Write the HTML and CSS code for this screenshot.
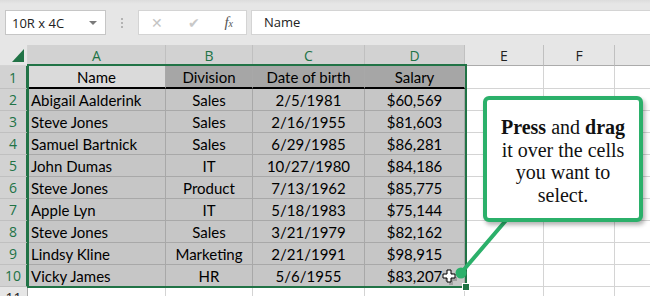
FILE: index.html
```html
<!DOCTYPE html>
<html lang="en">
<head>
    <meta charset="UTF-8">
    <title>Select a range</title>
    <link rel="stylesheet" href="styles.css">
</head>
<body>
    <div class="window">
        <div class="toolbar">
            <div class="namebox">
                <span>10R x 4C</span>
                <span class="arrow"></span>
            </div>
            <div class="grip"><i></i><i></i><i></i></div>
            <div class="fbuttons">
                <span class="fbtn">&#x2715;</span>
                <span class="fbtn check">&#x2714;</span>
                <span class="fbtn fx">f<small>x</small></span>
            </div>
            <div class="formula">Name</div>
        </div>

        <div class="sheet" id="sheet"></div>

        <div class="selection"><span class="handle"></span></div>

        <svg class="overlay" width="650" height="296" viewBox="0 0 650 296">
            <line x1="508" y1="218" x2="461" y2="273" stroke="#2bb06a" stroke-width="4" stroke-linecap="round"/>
            <circle cx="461" cy="273" r="5.5" fill="#2bb06a"/>
            <path d="M449 273h4v4h4v4h-4v4h-4v-4h-4v-4h4z" fill="#777" opacity="0.5"/>
            <path d="M447 270h4v4h4v4h-4v4h-4v-4h-4v-4h4z" fill="#fff" stroke="#000" stroke-width="1"/>
        </svg>

        <div class="callout">
            <b>Press</b> and <b>drag</b><br>it over the cells<br>you want to<br>select.
        </div>
    </div>

    <script>
        const cols = ['A', 'B', 'C', 'D', 'E', 'F', 'G'];
        const rows = [
            ['Name', 'Division', 'Date of birth', 'Salary'],
            ['Abigail Aalderink', 'Sales', '2/5/1981', '$60,569'],
            ['Steve Jones', 'Sales', '2/16/1955', '$81,603'],
            ['Samuel Bartnick', 'Sales', '6/29/1985', '$86,281'],
            ['John Dumas', 'IT', '10/27/1980', '$84,186'],
            ['Steve Jones', 'Product', '7/13/1962', '$85,775'],
            ['Apple Lyn', 'IT', '5/18/1983', '$75,144'],
            ['Steve Jones', 'Sales', '3/21/1979', '$82,162'],
            ['Lindsy Kline', 'Marketing', '2/21/1991', '$98,915'],
            ['Vicky James', 'HR', '5/6/1955', '$83,207']
        ];
        const sheet = document.getElementById('sheet');

        function cell(cls, text) {
            const d = document.createElement('div');
            d.className = cls;
            d.textContent = text || '';
            sheet.appendChild(d);
        }

        // column headers
        cell('corner');
        cols.forEach(function(c, i) {
            cell(i < 4 ? 'colhead on' : 'colhead', c);
        });

        // rows 1..11
        for (let r = 0; r < 11; r++) {
            const data = rows[r];
            cell(data ? 'rowhead on' : 'rowhead', String(r + 1));
            cols.forEach(function(c, i) {
                let cls = 'cell';
                if (data && i < 4) {
                    cls += ' sel';
                    if (r === 0) cls += i === 0 ? ' active title' : ' title';
                    if (i === 0 && r > 0) cls += ' left';
                }
                cell(cls, data && i < 4 ? data[i] : '');
            });
        }
    </script>
</body>
</html>
```

FILE: styles.css
```css
body {
    margin: 0;
    background: #fff;
}

.window {
    position: relative;
    width: 650px;
    height: 296px;
    overflow: hidden;
    font-family: 'Open Sans', sans-serif;
}

/* formula bar */
.toolbar {
    height: 45px;
    box-sizing: border-box;
    padding: 10px 0 0 5px;
    display: flex;
    align-items: flex-start;
    background: linear-gradient(#dcdcdc, #e6e6e6 4px);
}

.namebox {
    width: 101px;
    height: 25px;
    box-sizing: border-box;
    border: 1px solid #c6c6c6;
    background: #fff;
    display: flex;
    align-items: center;
    justify-content: space-between;
    padding: 0 8px 0 6px;
    font-size: 13px;
    color: #222;
}

.arrow {
    border: 4px solid transparent;
    border-top: 4px solid #7a7a7a;
    margin-top: 4px;
}

.grip {
    width: 32px;
    height: 25px;
    display: flex;
    flex-direction: column;
    align-items: center;
    justify-content: center;
    gap: 2px;
}

.grip i {
    width: 2px;
    height: 2px;
    background: #b3b3b3;
}

.fbuttons {
    width: 109px;
    height: 25px;
    box-sizing: border-box;
    border: 1px solid #d4d4d4;
    background: #fff;
    display: flex;
    align-items: center;
    justify-content: space-between;
    padding: 0 13px 0 12px;
}

.fbtn {
    font-size: 14px;
    color: #c4c4c4;
}

.fbtn.check {
    color: #c8c8c8;
}

.fx {
    font-family: 'Liberation Serif', serif;
    font-style: italic;
    color: #555;
    font-size: 15px;
}

.fx small {
    font-size: 10px;
}

.formula {
    flex: 1;
    height: 25px;
    box-sizing: border-box;
    margin-left: 4px;
    border: 1px solid #d4d4d4;
    border-right: none;
    background: #fff;
    padding: 2px 0 0 12px;
    font-size: 13px;
    color: #222;
}

/* grid */
.sheet {
    display: grid;
    width: 700px;
    grid-template-columns: 28px 138px 87px 112px 100px 79px 71px 1fr;
    grid-template-rows: 21px 23px repeat(9, 22px) 22px;
    font-family: 'Lato', sans-serif;
    font-size: 15px;
}

.sheet > div {
    box-sizing: border-box;
    border-right: 1px solid #d4d4d4;
    border-bottom: 1px solid #d4d4d4;
    display: flex;
    align-items: center;
    justify-content: center;
    white-space: nowrap;
    overflow: hidden;
}

.corner {
    background: #e6e6e6;
    position: relative;
}

.corner::after {
    content: '';
    position: absolute;
    right: 3px;
    bottom: 3px;
    border-left: 12px solid transparent;
    border-bottom: 13px solid #217346;
}

.colhead,
.rowhead {
    background: #e6e6e6;
    font-family: 'Open Sans', sans-serif;
    font-size: 14px;
    color: #222;
}

.sheet > .colhead {
    border-right-color: #c0c0c0;
    border-bottom-color: #ababab;
}

.sheet > .rowhead {
    border-bottom-color: #c0c0c0;
    border-right-color: #ababab;
}

.colhead.on,
.rowhead.on {
    background: #d2d2d2;
    color: #217346;
}

.sheet > .colhead.on {
    border-bottom: 2px solid #217346;
    padding-top: 1px;
}

.sheet > .rowhead.on {
    border-right: 2px solid #217346;
}

.cell {
    color: #000;
}

.sheet > .sel {
    background: #c6c6c6;
    border-color: #a8a8a8;
}

.sheet > .title {
    background: #a6a6a6;
    border-bottom: 2px solid #000;
}

.sheet > .active {
    background: #dadada;
}

.sheet > .left {
    justify-content: flex-start;
    padding-left: 3px;
}

/* overlays */
.selection {
    position: absolute;
    left: 27px;
    top: 64px;
    width: 440px;
    height: 224px;
    box-sizing: border-box;
    border: 2px solid #217346;
    pointer-events: none;
}

.handle {
    position: absolute;
    right: -5px;
    bottom: -5px;
    width: 6px;
    height: 6px;
    background: #217346;
    border: 1px solid #fff;
}

.overlay {
    position: absolute;
    left: 0;
    top: 0;
}

.callout {
    position: absolute;
    left: 483px;
    top: 96px;
    width: 160px;
    height: 126px;
    box-sizing: border-box;
    border: 4px solid #2bb06a;
    border-radius: 6px;
    background: #fff;
    box-shadow: 2px 3px 4px rgba(0, 0, 0, 0.3);
    padding: 16px 0 0;
    font-family: 'Liberation Serif', serif;
    font-size: 20px;
    line-height: 22.5px;
    text-align: center;
    color: #111;
}
```
